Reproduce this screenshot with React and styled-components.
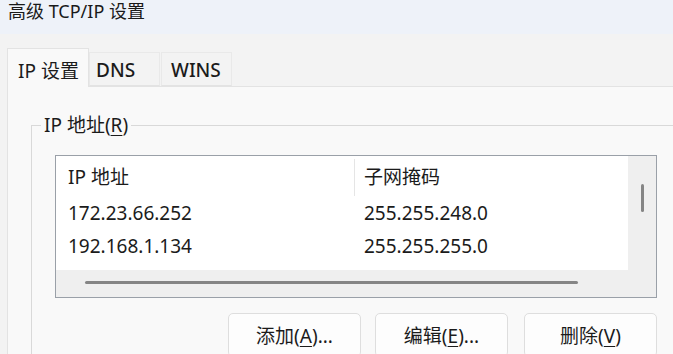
import React from "react";
import styled, { createGlobalStyle } from "styled-components";

const Global = createGlobalStyle`
  html, body { margin: 0; padding: 0; overflow: hidden; }
  body {
    background: #f3f3f3;
    font-family: "Noto Sans", "Noto Sans CJK SC", sans-serif;
    font-size: 19px;
    color: #1b1b1b;
  }
`;

const Window = styled.div`
  width: 673px;
  height: 354px;
  overflow: hidden;
  background: #f3f3f3;
`;

const TitleBar = styled.div`
  height: 34px;
  line-height: 23px;
  padding-left: 8px;
  background: #eef2f9;
  font-size: 18px;
  color: #1a1a1a;
  box-sizing: border-box;
`;

const TabStrip = styled.div`
  display: flex;
  align-items: flex-end;
  margin-top: 14px;
  padding-left: 7px;
  height: 38px;
  position: relative;
  z-index: 1;
`;

const Tab = styled.div`
  box-sizing: border-box;
  width: ${(p) => p.$w}px;
  padding-left: ${(p) => p.$pl}px;
  height: ${(p) => (p.$active ? 39 : 34)}px;
  margin-bottom: ${(p) => (p.$active ? -1 : 0)}px;
  margin-right: ${(p) => p.$mr || 0}px;
  padding-top: ${(p) => (p.$active ? 4 : 1)}px;
  display: flex;
  align-items: center;
  background: ${(p) => (p.$active ? "#f9f9f9" : "#f3f3f3")};
  border: 1px solid ${(p) => (p.$active ? "#e3e3e3" : "#e9e9e9")};
  border-bottom: ${(p) => (p.$active ? "none" : "1px solid #e3e3e3")};
  font-weight: ${(p) => (p.$active ? 400 : 500)};
  color: #1b1b1b;
`;

const Panel = styled.div`
  margin-left: 7px;
  margin-right: -60px;
  background: #f9f9f9;
  border: 1px solid #e3e3e3;
  padding: 25px 0 0 23px;
  height: 300px;
  box-sizing: border-box;
`;

const Group = styled.fieldset`
  margin: 0;
  width: 680px;
  border: 1px solid #d9d9d9;
  padding: 0 40px 0 23px;
  min-width: 0;
  height: 300px;
  box-sizing: border-box;
`;

const Legend = styled.legend`
  margin-left: -14px;
  padding: 0 3px;
  line-height: 26px;
  color: #1b1b1b;
`;

const Mnemonic = styled.span`
  text-decoration: underline;
  text-underline-offset: 3px;
  text-decoration-thickness: 1px;
`;

const ListBox = styled.div`
  margin-top: 17px;
  width: 602px;
  height: 143px;
  box-sizing: border-box;
  border: 1px solid #9aa0a8;
  display: grid;
  grid-template-columns: 1fr 28px;
  grid-template-rows: 1fr 27px;
  background: #efefef;
`;

const Content = styled.div`
  background: #ffffff;
  display: flex;
  flex-direction: column;
`;

const HeaderRow = styled.div`
  display: grid;
  grid-template-columns: 298px 1fr;
  height: 40px;
  align-items: center;
  padding-top: 3px;
  box-sizing: border-box;
`;

const HeaderCell = styled.div`
  height: 37px;
  display: flex;
  align-items: center;
  padding-left: ${(p) => p.$pl}px;
  padding-bottom: 4px;
  box-sizing: border-box;
  border-left: ${(p) => (p.$sep ? "1px solid #e5e5e5" : "none")};
`;

const Row = styled.div`
  display: grid;
  grid-template-columns: 298px 1fr;
  height: 33px;
  align-items: center;
`;

const Cell = styled.div`
  padding-left: ${(p) => p.$pl}px;
`;

const VScroll = styled.div`
  background: #efefef;
  padding: 28px 0 0 13px;
`;

const VThumb = styled.div`
  width: 3px;
  height: 28px;
  border-radius: 2px;
  background: #858585;
`;

const HScroll = styled.div`
  grid-column: 1 / span 2;
  background: #efefef;
  padding: 11px 0 0 29px;
`;

const HThumb = styled.div`
  width: 493px;
  height: 3px;
  border-radius: 2px;
  background: #858585;
`;

const ButtonRow = styled.div`
  width: 602px;
  display: flex;
  justify-content: flex-end;
  gap: 14px;
  margin-top: 15px;
`;

const Button = styled.button`
  width: 133px;
  height: 44px;
  box-sizing: border-box;
  border: 1px solid #dedede;
  border-radius: 5px;
  background: #fdfdfd;
  font-family: inherit;
  font-size: 19px;
  color: #1b1b1b;
  padding: 0;
  margin-left: ${(p) => p.$ml || 0}px;
`;

const rows = [
  ["172.23.66.252", "255.255.248.0"],
  ["192.168.1.134", "255.255.255.0"],
];

export default function App() {
  return (
    <Window>
      <Global />
      <TitleBar>高级 TCP/IP 设置</TitleBar>
      <TabStrip>
        <Tab $active $w={82} $pl={10}>IP 设置</Tab>
        <Tab $w={71} $pl={6} $mr={1}>DNS</Tab>
        <Tab $w={71} $pl={9}>WINS</Tab>
      </TabStrip>
      <Panel>
        <Group>
          <Legend>
            IP 地址(<Mnemonic>R</Mnemonic>)
          </Legend>
          <ListBox>
            <Content>
              <HeaderRow>
                <HeaderCell $pl={12}>IP 地址</HeaderCell>
                <HeaderCell $pl={9} $sep>子网掩码</HeaderCell>
              </HeaderRow>
              {rows.map(([ip, mask]) => (
                <Row key={ip}>
                  <Cell $pl={12}>{ip}</Cell>
                  <Cell $pl={10}>{mask}</Cell>
                </Row>
              ))}
            </Content>
            <VScroll>
              <VThumb />
            </VScroll>
            <HScroll>
              <HThumb />
            </HScroll>
          </ListBox>
          <ButtonRow>
            <Button>
              添加(<Mnemonic>A</Mnemonic>)...
            </Button>
            <Button>
              编辑(<Mnemonic>E</Mnemonic>)...
            </Button>
            <Button $ml={2}>
              删除(<Mnemonic>V</Mnemonic>)
            </Button>
          </ButtonRow>
        </Group>
      </Panel>
    </Window>
  );
}
